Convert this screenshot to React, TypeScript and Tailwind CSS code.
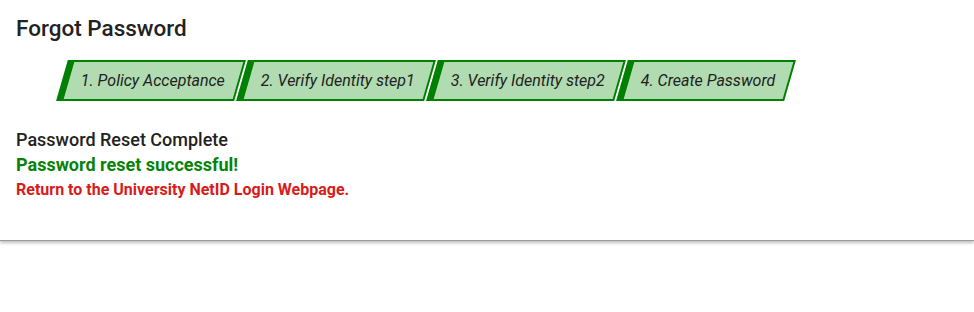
const STEPS = [
  "1. Policy Acceptance",
  "2. Verify Identity step1",
  "3. Verify Identity step2",
  "4. Create Password",
];

export default function App() {
  return (
    <div className="bg-white w-[974px] h-[312px] font-['Roboto',sans-serif]">
      <div className="h-[241px] border-b border-[#9a9a9a] shadow-[0_2px_3px_rgba(0,0,0,0.25)] px-4 pt-[14px]">
        <h1 className="text-[22.5px] leading-[28px] font-medium text-[#222]">Forgot Password</h1>

        <div className="flex gap-[2px] mt-[18px] ml-[46px]">
          {STEPS.map((step) => (
            <div
              key={step}
              className="h-[41px] -skew-x-[16deg] bg-[#b1dbb1] border-2 border-l-[7px] border-[#008000] flex items-center pl-[12px] pr-[13px]"
            >
              <span className="skew-x-[16deg] italic text-[16px] text-[#222] whitespace-nowrap">{step}</span>
            </div>
          ))}
        </div>

        <div className="mt-[28px] text-[18px] leading-[22px] font-medium text-[#222]">Password Reset Complete</div>
        <div className="mt-[3px] text-[18px] leading-[22px] font-bold text-[#078307]">Password reset successful!</div>
        <div className="mt-[4px] text-[16px] leading-[20px] font-bold text-[#d81b1b]">Return to the University NetID Login Webpage.</div>
      </div>
    </div>
  );
}
